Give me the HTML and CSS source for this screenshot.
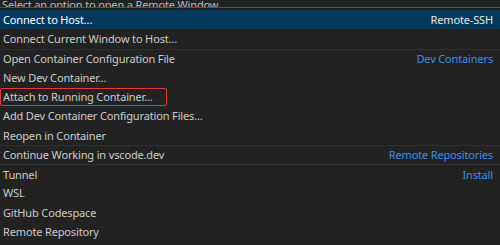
FILE: index.html
```html
<!DOCTYPE html>
<html>
<head>
<meta charset="utf-8">
<link rel="stylesheet" href="styles.css">
</head>
<body>
<div class="picker">
  <div class="header"><span>Select an option to open a Remote Window</span></div>
  <div class="focus-line"></div>
  <ul class="list">
    <li class="row selected"><span class="label">Connect to Host...</span><span class="group light">Remote-SSH</span></li>
    <li class="row"><span class="label">Connect Current Window to Host...</span></li>
    <li class="row sep"><span class="label">Open Container Configuration File</span><span class="group">Dev Containers</span></li>
    <li class="row"><span class="label">New Dev Container...</span></li>
    <li class="row marked"><span class="label">Attach to Running Container...</span><span class="mark"></span></li>
    <li class="row"><span class="label">Add Dev Container Configuration Files...</span></li>
    <li class="row"><span class="label">Reopen in Container</span></li>
    <li class="row sep"><span class="label">Continue Working in vscode.dev</span><span class="group">Remote Repositories</span></li>
    <li class="row sep"><span class="label">Tunnel</span><span class="group">Install</span></li>
    <li class="row"><span class="label">WSL</span></li>
    <li class="row"><span class="label">GitHub Codespace</span></li>
    <li class="row"><span class="label">Remote Repository</span></li>
  </ul>
</div>
</body>
</html>
```

FILE: styles.css
```css
html, body {
  margin: 0;
  padding: 0;
  background: #222222;
}
body {
  width: 500px;
  height: 245px;
  overflow: hidden;
  font-family: "Noto Sans", "Open Sans", sans-serif;
  font-size: 11px;
  letter-spacing: -0.15px;
  color: #cccccc;
}
.picker {
  display: flex;
  flex-direction: column;
}
.header {
  height: 7px;
  overflow: hidden;
  display: flex;
  align-items: flex-end;
  padding-left: 2px;
}
.header span {
  line-height: 14px;
  margin-bottom: -5px;
  white-space: nowrap;
  color: #bbbbbb;
}
.focus-line {
  height: 1px;
  background: #0b6aa8;
}
.list {
  list-style: none;
  margin: 2px 0 0 0;
  padding: 0;
}
.row {
  position: relative;
  height: 19.25px;
  box-sizing: border-box;
  display: flex;
  align-items: center;
  justify-content: space-between;
  padding: 0 7px 0 3px;
  white-space: nowrap;
}
.row.sep {
  border-top: 1px solid #303030;
}
.row.selected {
  background: #04395e;
  color: #ffffff;
}
.group {
  color: #3b8eea;
}
.group.light {
  color: #e8e8e8;
}
.mark {
  position: absolute;
  left: 0;
  top: 1px;
  width: 167px;
  height: 18px;
  box-sizing: border-box;
  border: 1.5px solid #e23a36;
  border-radius: 2px;
}
```
